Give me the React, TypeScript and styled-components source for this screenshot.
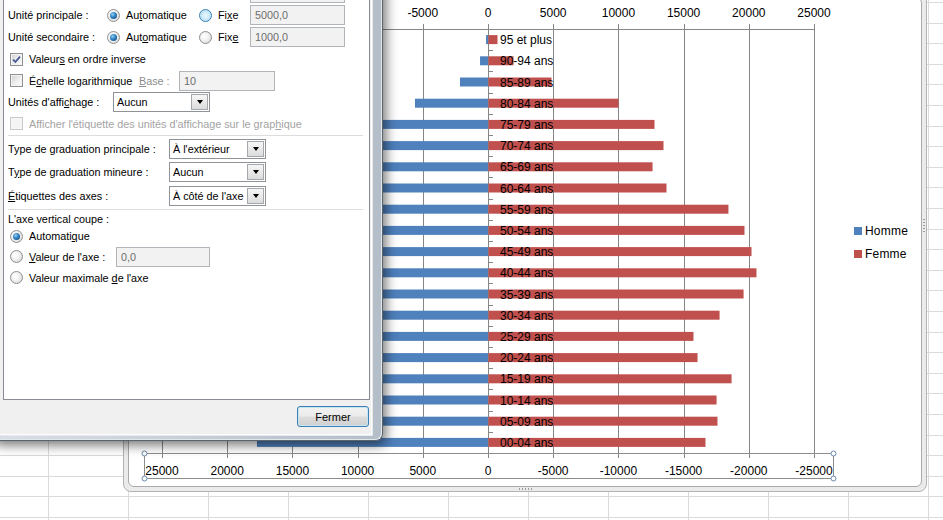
import React from "react";
import styled, { createGlobalStyle } from "styled-components";

const GlobalStyle = createGlobalStyle`
  html, body { margin: 0; padding: 0; background: #ffffff; }
  body { font-family: "Liberation Sans", Arial, sans-serif; }
`;

const Sheet = styled.div`
  position: relative;
  width: 943px;
  height: 520px;
  overflow: hidden;
  background-color: #ffffff;
  background-image:
    repeating-linear-gradient(90deg, transparent 0 48px, #d9dadc 48px 49px, transparent 49px 80px),
    repeating-linear-gradient(180deg, transparent 0 2px, #d9dadc 2px 3px, transparent 3px 20.6px);
`;

/* ---------- chart object ---------- */

const ChartObject = styled.div`
  position: absolute;
  left: 123px;
  top: -8px;
  width: 804px;
  height: 500px;
  box-sizing: border-box;
  padding: 4px;
  border: 1px solid #b3b3b3;
  border-radius: 8px;
  background: #ebebeb;
  z-index: 1;
`;

const ChartArea = styled.div`
  box-sizing: border-box;
  height: 100%;
  display: flex;
  background: #ffffff;
  border: 1px solid #a9a9a9;
  border-radius: 6px;
  overflow: hidden;
`;

const PlotSvg = styled.svg`
  flex-shrink: 0;
  display: block;
  font-family: "Liberation Sans", Arial, sans-serif;
  font-size: 12px;
`;

const Legend = styled.div`
  display: flex;
  flex-direction: column;
  justify-content: center;
  font-size: 12px;
  letter-spacing: 0.2px;
  color: #000;
`;

const LegendItem = styled.div`
  display: flex;
  align-items: center;
  gap: 3px;
  height: 23px;
`;

const Swatch = styled.span<{ $color: string }>`
  width: 8px;
  height: 8px;
  background: ${(p) => p.$color};
`;

interface GripProps {
  $vertical?: boolean;
}
const Grip = styled.span<GripProps>`
  position: absolute;
  ${(p) =>
    p.$vertical
      ? `right: 1px; top: 226px; width: 2px; height: 15px;
         background: repeating-linear-gradient(180deg, #9c9c9c 0 1px, transparent 1px 3px);`
      : `bottom: 1px; left: 395px; width: 15px; height: 2px;
         background: repeating-linear-gradient(90deg, #9c9c9c 0 1px, transparent 1px 3px);`}
`;

/* ---------- dialog ---------- */

const DialogWindow = styled.div`
  position: absolute;
  left: -10px;
  top: -40px;
  width: 393px;
  height: 481px;
  box-sizing: border-box;
  padding: 0 11px 6px 8px;
  display: flex;
  border: 1px solid #5b636c;
  border-top: none;
  border-radius: 0 0 7px 7px;
  background: linear-gradient(90deg, #d9dfe6 0%, #b4bec9 100%);
  box-shadow: 3px 4px 12px rgba(0, 0, 0, 0.55), inset -1px -1px 0 #e2e7ec;
  z-index: 2;
  font-size: 10.8px;
  color: #000;
`;

const ClientArea = styled.div`
  flex: 1;
  display: flex;
  flex-direction: column;
  background: #f0f0f0;
  box-shadow: 1px 1px 0 #fdfdfd, 2px 2px 0 #e6eaee;
`;

const Panel = styled.div`
  height: 440px;
  flex-shrink: 0;
  box-sizing: border-box;
  margin: 0 1px 0 4px;
  padding: 22px 0 0 4px;
  background: #ffffff;
  border: 1px solid #898c95;
  border-top: none;
  display: flex;
  flex-direction: column;
`;

const Footer = styled.div`
  flex: 1;
  display: flex;
  justify-content: flex-end;
  align-items: flex-start;
  padding: 6px 2px 0 0;
`;

const CloseButton = styled.button`
  width: 72px;
  height: 21px;
  padding: 0;
  font-family: inherit;
  font-size: 11px;
  color: #000;
  border: 1px solid #3c7fb1;
  border-radius: 3px;
  background: linear-gradient(180deg, #f2f2f2 0%, #ebebeb 48%, #dddddd 52%, #cfcfcf 100%);
  box-shadow: inset 0 0 0 1px #c4e5f6;
`;

const Row = styled.div<{ $h?: number }>`
  display: flex;
  align-items: center;
  height: ${(p) => p.$h ?? 22}px;
  flex-shrink: 0;
  white-space: nowrap;
`;

const Label = styled.span<{ $w?: number; $muted?: boolean }>`
  width: ${(p) => (p.$w ? `${p.$w}px` : "auto")};
  flex-shrink: 0;
  color: ${(p) => (p.$muted ? "#8d8d8d" : "#000")};
`;

const Option = styled.span<{ $w?: number; $inset?: boolean; $muted?: boolean }>`
  display: flex;
  align-items: center;
  gap: 6px;
  flex-shrink: 0;
  width: ${(p) => (p.$w ? `${p.$w}px` : "auto")};
  margin-left: ${(p) => (p.$inset ? "2px" : "0")};
  color: ${(p) => (p.$muted ? "#a3a3a3" : "#000")};
`;

const Key = styled.span`
  text-decoration: underline;
  text-underline-offset: 1px;
`;

interface RadioProps {
  $checked?: boolean;
  $hot?: boolean;
}
const Radio = styled.span<RadioProps>`
  position: relative;
  width: 13px;
  height: 13px;
  box-sizing: border-box;
  flex-shrink: 0;
  border-radius: 50%;
  border: 1px solid ${(p) => (p.$hot ? "#3c7fb1" : "#8e8f8f")};
  background: ${(p) =>
    p.$hot
      ? "radial-gradient(circle at 50% 50%, #eaf7fe 0%, #c8e8f9 55%, #9fd3f2 100%)"
      : "radial-gradient(circle at 40% 40%, #ffffff 0%, #f3f3f3 40%, #cfcfcf 100%)"};
  &::after {
    content: "";
    display: ${(p) => (p.$checked ? "block" : "none")};
    position: absolute;
    left: 2px;
    top: 2px;
    width: 7px;
    height: 7px;
    border-radius: 50%;
    background: radial-gradient(circle at 38% 35%, #8fd0f5 0%, #2f80c0 45%, #0d3b6b 100%);
  }
`;

interface CheckBoxProps {
  $disabled?: boolean;
}
const CheckBox = styled.span<CheckBoxProps>`
  width: 13px;
  height: 13px;
  box-sizing: border-box;
  flex-shrink: 0;
  display: flex;
  align-items: center;
  justify-content: center;
  border: 1px solid ${(p) => (p.$disabled ? "#c9c9c9" : "#8e8f8f")};
  background: ${(p) =>
    p.$disabled ? "#f4f4f4" : "linear-gradient(135deg, #cdd0d4 0%, #eeeeee 55%, #ffffff 100%)"};
  box-shadow: inset 0 0 0 1px ${(p) => (p.$disabled ? "#f7f7f7" : "#f4f4f4")};
`;

const TextField = styled.span<{ $w: number }>`
  width: ${(p) => p.$w}px;
  height: 20px;
  box-sizing: border-box;
  flex-shrink: 0;
  display: flex;
  align-items: center;
  padding-left: 4px;
  border: 1px solid #b1b4b8;
  background: #f2f2f2;
  color: #6d6d6d;
`;

const Select = styled.span`
  width: 97px;
  height: 20px;
  box-sizing: border-box;
  flex-shrink: 0;
  display: flex;
  align-items: center;
  border: 1px solid #8f9297;
  background: #ffffff;
`;

const SelectText = styled.span`
  flex: 1;
  overflow: hidden;
  padding-left: 3px;
`;

const DropButton = styled.span`
  width: 17px;
  height: 16px;
  box-sizing: border-box;
  margin-right: 1px;
  display: flex;
  align-items: center;
  justify-content: center;
  border: 1px solid #a4a7ac;
  background: linear-gradient(180deg, #f7f7f7 0%, #e9e9e9 50%, #dcdcdc 100%);
  &::before {
    content: "";
    border-left: 3.5px solid transparent;
    border-right: 3.5px solid transparent;
    border-top: 4px solid #000;
  }
`;

const Separator = styled.div`
  width: 355px;
  height: 1px;
  flex-shrink: 0;
  margin: 1px 0;
  background: #dcdcdc;
`;

/* ---------- data ---------- */

interface AgeGroup {
  label: string;
  homme: number;
  femme: number;
}

const pyramid: AgeGroup[] = [
  { label: "95 et plus", homme: 150, femme: 690 },
  { label: "90-94 ans", homme: 610, femme: 1920 },
  { label: "85-89 ans", homme: 2150, femme: 4830 },
  { label: "80-84 ans", homme: 5600, femme: 9970 },
  { label: "75-79 ans", homme: 9400, femme: 12730 },
  { label: "70-74 ans", homme: 11000, femme: 13420 },
  { label: "65-69 ans", homme: 10800, femme: 12580 },
  { label: "60-64 ans", homme: 12500, femme: 13650 },
  { label: "55-59 ans", homme: 17500, femme: 18400 },
  { label: "50-54 ans", homme: 19000, femme: 19630 },
  { label: "45-49 ans", homme: 19800, femme: 20170 },
  { label: "40-44 ans", homme: 20300, femme: 20550 },
  { label: "35-39 ans", homme: 19500, femme: 19560 },
  { label: "30-34 ans", homme: 17600, femme: 17720 },
  { label: "25-29 ans", homme: 15900, femme: 15720 },
  { label: "20-24 ans", homme: 16400, femme: 16030 },
  { label: "15-19 ans", homme: 19000, femme: 18640 },
  { label: "10-14 ans", homme: 18200, femme: 17490 },
  { label: "05-09 ans", homme: 18300, femme: 17560 },
  { label: "00-04 ans", homme: 17720, femme: 16640 },
];

const ZERO = 488;
const UNIT = 65.2 / 5000;
const AXIS_TOP = 29;
const AXIS_BOTTOM = 453;
const BAND = (AXIS_BOTTOM - AXIS_TOP) / pyramid.length;
const steps = [-25000, -20000, -15000, -10000, -5000, 0, 5000, 10000, 15000, 20000, 25000];
const xAt = (v: number) => ZERO + v * UNIT;
const px = (v: number) => Math.round(v) + 0.5;

const BLUE = "#4f81bd";
const RED = "#c0504d";
const GRID = "#868686";

function PyramidPlot() {
  const left = xAt(-25000);
  const right = xAt(25000);
  return (
    <PlotSvg width={725} height={488}>
      <g transform="translate(-129 2)">
        {steps.map((v) => (
          <line key={`g${v}`} x1={px(xAt(v))} x2={px(xAt(v))} y1={24} y2={458} stroke={GRID} />
        ))}
        <line x1={px(left)} x2={px(right)} y1={AXIS_TOP + 0.5} y2={AXIS_TOP + 0.5} stroke={GRID} />
        <line x1={px(left)} x2={px(right)} y1={AXIS_BOTTOM + 0.5} y2={AXIS_BOTTOM + 0.5} stroke={GRID} />
        {pyramid.slice(1).map((g, i) => {
          const y = Math.round(AXIS_TOP + BAND * (i + 1)) + 0.5;
          return <line key={`t${g.label}`} x1={ZERO} x2={ZERO + 5} y1={y} y2={y} stroke={GRID} />;
        })}
        {pyramid.map((g, i) => {
          const c = AXIS_TOP + BAND * (i + 0.5);
          return (
            <g key={g.label}>
              <rect x={xAt(-g.homme)} y={c - 4.5} width={g.homme * UNIT} height={9} fill={BLUE} />
              <rect x={ZERO + 0.5} y={c - 4.5} width={g.femme * UNIT} height={9} fill={RED} />
              <text x={500} y={c + 4.5} fill="#000">
                {g.label}
              </text>
            </g>
          );
        })}
        {steps.map((v) => (
          <text key={`a${v}`} x={xAt(v)} y={17} textAnchor="middle" fill="#000">
            {String(v)}
          </text>
        ))}
        {steps.map((v) => (
          <text key={`b${v}`} x={xAt(v)} y={475} textAnchor="middle" fill="#000">
            {String(-v || 0)}
          </text>
        ))}
        <rect x={144.5} y={453.5} width={689} height={25} fill="none" stroke="#8c8c8c" />
        {[
          [144.5, 453.5],
          [144.5, 478.5],
          [833.5, 453.5],
          [833.5, 478.5],
        ].map(([cx, cy]) => (
          <circle key={`${cx}-${cy}`} cx={cx} cy={cy} r={2.5} fill="#ffffff" stroke="#6a88ad" />
        ))}
      </g>
    </PlotSvg>
  );
}

const CheckMark = () => (
  <svg width="9" height="9" viewBox="0 0 9 9">
    <path d="M1 4.6 L3.4 7 L8 1.6" fill="none" stroke="#4a5a96" strokeWidth="1.8" />
  </svg>
);

function FormatAxisDialog() {
  return (
    <DialogWindow>
      <ClientArea>
        <Panel>
          {/* row above, scrolled out of view: only its field's lower edge shows */}
          <Row>
            <Label $w={99} />
            <Option $w={92} />
            <Option $w={51} />
            <TextField $w={95} />
          </Row>
          <Row>
            <Label $w={99}>Unité principale :</Label>
            <Option $w={92}>
              <Radio $checked />
              <span>
                Au<Key>t</Key>omatique
              </span>
            </Option>
            <Option $w={51}>
              <Radio $hot />
              <span>
                Fi<Key>x</Key>e
              </span>
            </Option>
            <TextField $w={95}>5000,0</TextField>
          </Row>
          <Row>
            <Label $w={99}>Unité secondaire :</Label>
            <Option $w={92}>
              <Radio $checked />
              <span>
                Aut<Key>o</Key>matique
              </span>
            </Option>
            <Option $w={51}>
              <Radio />
              <span>
                Fix<Key>e</Key>
              </span>
            </Option>
            <TextField $w={95}>1000,0</TextField>
          </Row>
          <Row>
            <Option $inset>
              <CheckBox>
                <CheckMark />
              </CheckBox>
              <span>
                Valeur<Key>s</Key> en ordre inverse
              </span>
            </Option>
          </Row>
          <Row $h={21}>
            <Option $inset $w={129}>
              <CheckBox />
              <span>
                É<Key>c</Key>helle logarithmique
              </span>
            </Option>
            <Label $w={40} $muted>
              <Key>B</Key>ase :
            </Label>
            <TextField $w={96}>10</TextField>
          </Row>
          <Row>
            <Label $w={105}>
              Unités d'affi<Key>c</Key>hage :
            </Label>
            <Select>
              <SelectText>Aucun</SelectText>
              <DropButton />
            </Select>
          </Row>
          <Row $h={21}>
            <Option $inset $muted>
              <CheckBox $disabled />
              <span>
                Afficher l'étiquette des unités d'affichage sur le grap<Key>h</Key>ique
              </span>
            </Option>
          </Row>
          <Separator />
          <Row $h={23}>
            <Label $w={161}>
              Type de <Key>g</Key>raduation principale :
            </Label>
            <Select>
              <SelectText>À l'extérieur</SelectText>
              <DropButton />
            </Select>
          </Row>
          <Row $h={24}>
            <Label $w={161}>
              T<Key>y</Key>pe de graduation mineure :
            </Label>
            <Select>
              <SelectText>Aucun</SelectText>
              <DropButton />
            </Select>
          </Row>
          <Row $h={24}>
            <Label $w={161}>
              <Key>É</Key>tiquettes des axes :
            </Label>
            <Select>
              <SelectText>À côté de l'axe</SelectText>
              <DropButton />
            </Select>
          </Row>
          <Separator />
          <Row $h={15}>
            <Label>L'axe vertical coupe :</Label>
          </Row>
          <Row $h={20}>
            <Option $inset>
              <Radio $checked />
              <span>
                Automati<Key>q</Key>ue
              </span>
            </Option>
          </Row>
          <Row $h={21}>
            <Option $inset $w={106}>
              <Radio />
              <span>
                <Key>V</Key>aleur de l'axe :
              </span>
            </Option>
            <TextField $w={94}>0,0</TextField>
          </Row>
          <Row $h={21}>
            <Option $inset>
              <Radio />
              <span>
                Valeur maximale <Key>d</Key>e l'axe
              </span>
            </Option>
          </Row>
        </Panel>
        <Footer>
          <CloseButton>Fermer</CloseButton>
        </Footer>
      </ClientArea>
    </DialogWindow>
  );
}

export default function App() {
  return (
    <>
      <GlobalStyle />
      <Sheet>
        <ChartObject>
          <ChartArea>
            <PyramidPlot />
            <Legend>
              <LegendItem>
                <Swatch $color={BLUE} />
                Homme
              </LegendItem>
              <LegendItem>
                <Swatch $color={RED} />
                Femme
              </LegendItem>
            </Legend>
          </ChartArea>
          <Grip />
          <Grip $vertical />
        </ChartObject>
        <FormatAxisDialog />
      </Sheet>
    </>
  );
}
